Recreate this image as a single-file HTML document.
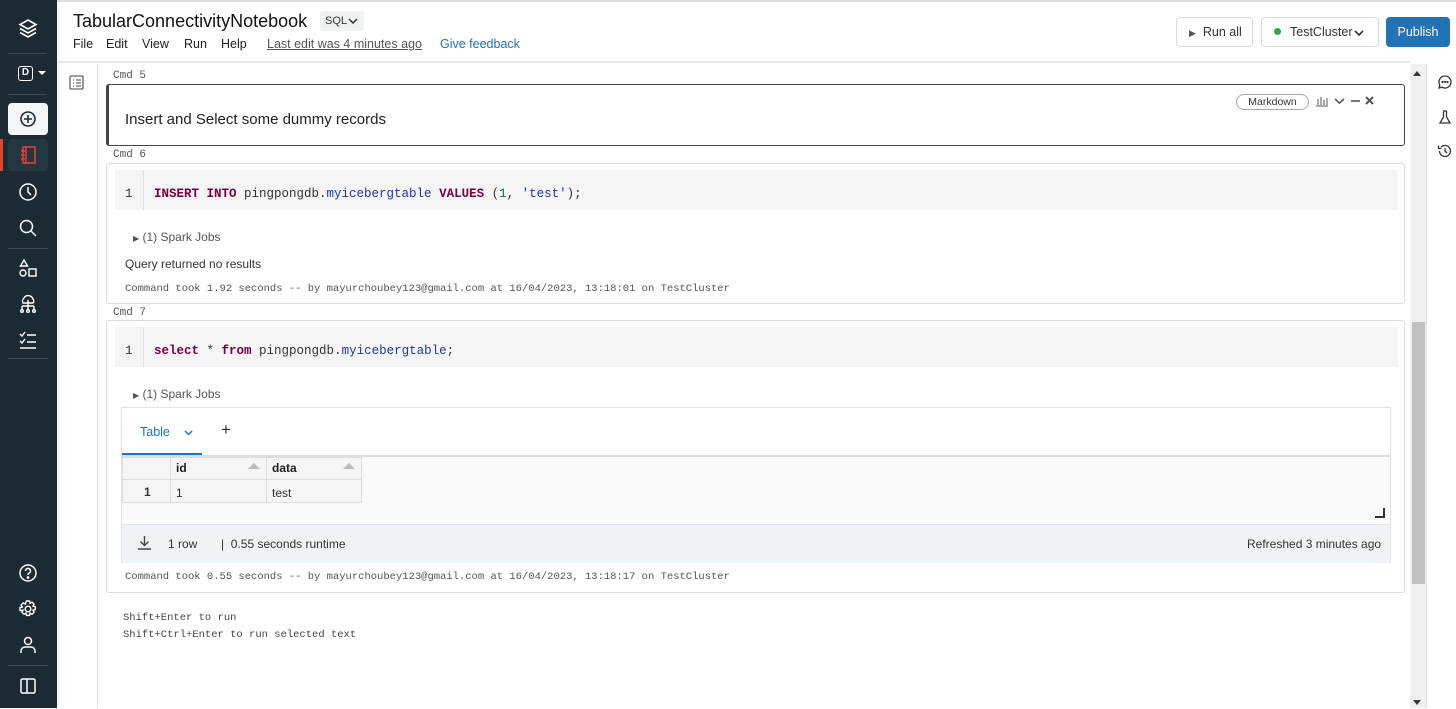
<!DOCTYPE html>
<html><head><meta charset="utf-8"><style>
*{box-sizing:border-box;margin:0;padding:0}
body{width:1456px;height:708px;overflow:hidden;background:#fff;font-family:"Liberation Sans","DejaVu Sans",sans-serif;position:relative;color:#333}
.a{position:absolute}
.mono{font-family:"Liberation Mono","DejaVu Sans Mono",monospace}
.sb{left:0;top:0;width:57px;height:708px;background:#1b2a33}
.sb svg{position:absolute;left:18px}
.cmd{font-size:11px;color:#555}
.cell{border:1px solid #ddd;border-radius:3px;background:#fff}
.code{background:#f5f5f5}
</style></head><body>
<div class="a" style="left:0;top:0;width:1456px;height:2px;background:#ddd"></div>
<div class="a sb">
 <svg style="top:18px" width="20" height="22" viewBox="0 0 20 22" fill="none" stroke="#fff" stroke-width="1.6"><path d="M10 2L18 6.5 10 11 2 6.5Z"/><path d="M2 10.5L10 15 18 10.5"/><path d="M2 14.5L10 19 18 14.5"/></svg>
 <div class="a" style="left:8px;top:53px;width:39px;height:1px;background:#3a4a52"></div>
 <div class="a" style="left:18px;top:66px;width:15px;height:15px;border:1.5px solid #fff;border-radius:3px;color:#fff;font-size:10px;font-weight:bold;text-align:center;line-height:12px">D</div>
 <div class="a" style="left:38px;top:71px;border:4px solid transparent;border-top:4px solid #fff"></div>
 <div class="a" style="left:8px;top:94px;width:39px;height:1px;background:#3a4a52"></div>
 <div class="a" style="left:8px;top:103px;width:40px;height:32px;background:#f4f5f6;border-radius:4px"></div>
 <svg style="top:110px;left:19px" width="18" height="18" viewBox="0 0 18 18" fill="none" stroke="#1b2a33" stroke-width="1.6"><circle cx="9" cy="9" r="7"/><path d="M9 5v8M5 9h8"/></svg>
 <div class="a" style="left:8px;top:139px;width:40px;height:32px;background:#24363f;border-radius:4px"></div>
 <div class="a" style="left:0;top:139px;width:3px;height:32px;background:#e8412c"></div>
 <svg style="top:146px;left:20px" width="16" height="18" viewBox="0 0 16 18" fill="none" stroke="#e8412c" stroke-width="1.5"><rect x="3" y="1" width="12" height="16"/><path d="M6 1v16M1 5h4M1 9h4M1 13h4"/></svg>
 <svg style="top:182px" width="20" height="20" viewBox="0 0 20 20" fill="none" stroke="#fff" stroke-width="1.5"><circle cx="10" cy="10" r="8"/><path d="M10 5v5l3 3"/></svg>
 <svg style="top:218px" width="20" height="20" viewBox="0 0 20 20" fill="none" stroke="#fff" stroke-width="1.5"><circle cx="8.5" cy="8.5" r="6"/><path d="M13 13l5 5"/></svg>
 <div class="a" style="left:8px;top:248px;width:40px;height:1px;background:#3a4a52"></div>
 <svg style="top:258px" width="20" height="20" viewBox="0 0 20 20" fill="none" stroke="#fff" stroke-width="1.4"><path d="M6 2l3.5 6h-7z"/><circle cx="5" cy="15" r="3"/><rect x="11" y="11" width="7" height="7"/></svg>
 <svg style="top:294px" width="20" height="20" viewBox="0 0 20 20" fill="none" stroke="#fff" stroke-width="1.4"><path d="M5 9a4 4 0 0 1 1-5 5 5 0 0 1 9 1 3 3 0 0 1 0 4H5z"/><path d="M10 6v10M4 12h12M4 12v4M16 12v4"/><circle cx="4" cy="17" r="1.3"/><circle cx="10" cy="17" r="1.3"/><circle cx="16" cy="17" r="1.3"/></svg>
 <svg style="top:330px" width="20" height="20" viewBox="0 0 20 20" fill="none" stroke="#fff" stroke-width="1.4"><path d="M2 4l2 2 3-4M9 5h9M2 11l2 2 3-4M9 12h9M2 18h16"/></svg>
 <div class="a" style="left:8px;top:358px;width:40px;height:1px;background:#3a4a52"></div>
 <svg style="top:563px" width="20" height="20" viewBox="0 0 20 20" fill="none" stroke="#fff" stroke-width="1.5"><circle cx="10" cy="10" r="8"/><path d="M7.5 8a2.5 2.5 0 1 1 3.5 2.2c-.8.4-1 .9-1 1.8"/><circle cx="10" cy="14.5" r=".6" fill="#fff"/></svg>
 <svg style="top:599px" width="20" height="20" viewBox="0 0 20 20" fill="none" stroke="#fff" stroke-width="1.4"><circle cx="10" cy="10" r="2.8"/><path d="M8.5 2h3l.5 2.3 2-1.2 2.1 2.1-1.2 2 2.3.5v3l-2.3.5 1.2 2-2.1 2.1-2-1.2-.5 2.3h-3l-.5-2.3-2 1.2-2.1-2.1 1.2-2L2 11.5v-3l2.3-.5-1.2-2 2.1-2.1 2 1.2z"/></svg>
 <svg style="top:635px" width="20" height="20" viewBox="0 0 20 20" fill="none" stroke="#fff" stroke-width="1.5"><circle cx="10" cy="6" r="3.5"/><path d="M3 18v-2a4 4 0 0 1 4-4h6a4 4 0 0 1 4 4v2"/></svg>
 <div class="a" style="left:8px;top:665px;width:40px;height:1px;background:#3a4a52"></div>
 <svg style="top:676px" width="20" height="20" viewBox="0 0 20 20" fill="none" stroke="#fff" stroke-width="1.5"><rect x="3" y="3" width="14" height="14" rx="1.5"/><path d="M9 3v14"/></svg>
</div>
<!-- header -->
<div class="a" style="left:73px;top:11px;font-size:18px;color:#111">TabularConnectivityNotebook</div>
<div class="a" style="left:320px;top:11px;width:44px;height:20px;background:#f0f1f2;border-radius:3px;font-size:11px;color:#333;padding:4px 0 0 5px">SQL</div>
<svg class="a" style="left:348px;top:17px" width="10" height="8" viewBox="0 0 10 8" fill="none" stroke="#333" stroke-width="1.5"><path d="M1 2l4 4 4-4"/></svg>
<div class="a" style="top:37px;left:73px;font-size:12.5px;color:#222">File</div>
<div class="a" style="top:37px;left:106px;font-size:12.5px;color:#222">Edit</div>
<div class="a" style="top:37px;left:142px;font-size:12.5px;color:#222">View</div>
<div class="a" style="top:37px;left:184px;font-size:12.5px;color:#222">Run</div>
<div class="a" style="top:37px;left:221px;font-size:12.5px;color:#222">Help</div>
<div class="a" style="top:37px;left:267px;font-size:12.5px;color:#555;text-decoration:underline">Last edit was 4 minutes ago</div>
<div class="a" style="top:37px;left:440px;font-size:12.5px;color:#2272b4">Give feedback</div>
<div class="a" style="left:1176px;top:17px;width:77px;height:30px;border:1px solid #d8dde2;border-radius:4px;font-size:12.5px;color:#333;padding:7px 0 0 12px"><span style="font-size:9px;color:#555">&#9654;</span>&nbsp; Run all</div>
<div class="a" style="left:1261px;top:17px;width:118px;height:30px;border:1px solid #d8dde2;border-radius:4px;font-size:12.5px;color:#333;padding:7px 0 0 12px"><span style="display:inline-block;width:7px;height:7px;border-radius:50%;background:#2ea44f;margin-right:9px;vertical-align:1px"></span>TestCluster</div>
<svg class="a" style="left:1354px;top:29px" width="10" height="8" viewBox="0 0 10 8" fill="none" stroke="#333" stroke-width="1.6"><path d="M1 2l4 4 4-4"/></svg>
<div class="a" style="left:1386px;top:17px;width:64px;height:30px;background:#2272b4;border-radius:4px;font-size:12.5px;color:#fff;text-align:center;padding-top:8px">Publish</div>
<div class="a" style="left:58px;top:61px;width:1352px;height:3px;background:linear-gradient(#ddd,#fff)"></div>
<!-- gutter -->
<div class="a" style="left:97px;top:64px;width:1px;height:644px;background:#e5e5e5"></div>
<svg class="a" style="left:69px;top:75px" width="15" height="15" viewBox="0 0 15 15" fill="none" stroke="#444" stroke-width="1.1"><rect x="1" y="1" width="13" height="13" rx="1"/><path d="M4 5h1M7 5h5M4 8h1M7 8h5M4 11h1M7 11h5"/></svg>
<!-- right panel -->
<div class="a" style="left:1410px;top:64px;width:16px;height:644px;background:#f0f0f0"></div>
<div class="a" style="left:1412px;top:322px;width:13px;height:262px;background:#c1c1c1"></div>
<div class="a" style="left:1413px;top:67px;border:4px solid transparent;border-bottom:5px solid #333"></div>
<div class="a" style="left:1413px;top:700px;border:4px solid transparent;border-top:5px solid #333"></div>
<div class="a" style="left:1426px;top:64px;width:1px;height:644px;background:#dde3ea"></div>
<svg class="a" style="left:1437px;top:74px" width="16" height="16" viewBox="0 0 16 16" fill="none" stroke="#333" stroke-width="1.3"><path d="M8 2a6 6 0 1 1-3 11.2L2 14l.8-3A6 6 0 0 1 8 2z"/><circle cx="5.5" cy="8" r=".5"/><circle cx="8" cy="8" r=".5"/><circle cx="10.5" cy="8" r=".5"/></svg>
<svg class="a" style="left:1437px;top:109px" width="16" height="16" viewBox="0 0 16 16" fill="none" stroke="#333" stroke-width="1.3"><path d="M6 2h4M6.5 2v6L3 14h10L9.5 8V2"/></svg>
<svg class="a" style="left:1437px;top:143px" width="16" height="16" viewBox="0 0 16 16" fill="none" stroke="#333" stroke-width="1.3"><path d="M2.5 8a5.5 5.5 0 1 0 1.6-3.9M1.5 2.5v3h3M8 5v3l2 2"/></svg>
<!-- Cmd 5 -->
<div class="a cmd mono" style="left:113px;top:70px">Cmd 5</div>
<div class="a" style="left:106px;top:84px;width:1299px;height:62px;border:1px solid #444;border-left:3px solid #444;border-radius:3px"></div>
<div class="a" style="left:125px;top:111px;font-size:15px;color:#222">Insert and Select some dummy records</div>
<div class="a" style="left:1236px;top:94px;width:73px;height:16px;border:1px solid #aaa;border-radius:8px;font-size:10.5px;text-align:center;color:#333;line-height:14px">Markdown</div>
<svg class="a" style="left:1315px;top:94px" width="64" height="14" viewBox="0 0 64 14" fill="none" stroke="#555" stroke-width="1.6"><path d="M1 12h12M3 11V5M6 11V3M9 11V6M12 11V4" stroke-width="1"/><path d="M20 5l4.5 4 4.5-4"/><path d="M36 7h9"/><path d="M51 3l7 7M58 3l-7 7" stroke-width="2"/></svg>
<!-- Cmd 6 -->
<div class="a cmd mono" style="left:113px;top:149px">Cmd 6</div>
<div class="a cell" style="left:106px;top:163px;width:1299px;height:141px"></div>
<div class="a code" style="left:115px;top:170px;width:1283px;height:40px"></div>
<div class="a" style="left:143px;top:170px;width:1px;height:40px;background:#e2e2e2"></div>
<div class="a mono" style="left:125px;top:187px;font-size:12.5px;color:#333">1</div>
<div class="a mono" style="left:154px;top:187px;font-size:12.5px;color:#333;white-space:pre"><b style="color:#770044">INSERT INTO</b> pingpongdb.<span style="color:#2233aa">myicebergtable</span> <b style="color:#770044">VALUES</b> (<span style="color:#116644">1</span>, <span style="color:#2233aa">'test'</span>);</div>
<div class="a" style="left:133px;top:230px;font-size:12px;color:#555"><span style="font-size:8px">&#9654;</span> (1) Spark Jobs</div>
<div class="a" style="left:125px;top:257px;font-size:12px;color:#333">Query returned no results</div>
<div class="a mono" style="left:125px;top:283px;font-size:10.5px;color:#555">Command took 1.92 seconds -- by mayurchoubey123@gmail.com at 16/04/2023, 13:18:01 on TestCluster</div>
<!-- Cmd 7 -->
<div class="a cmd mono" style="left:113px;top:307px">Cmd 7</div>
<div class="a cell" style="left:106px;top:320px;width:1299px;height:273px"></div>
<div class="a code" style="left:115px;top:327px;width:1283px;height:40px"></div>
<div class="a" style="left:143px;top:327px;width:1px;height:40px;background:#e2e2e2"></div>
<div class="a mono" style="left:125px;top:344px;font-size:12.5px;color:#333">1</div>
<div class="a mono" style="left:154px;top:344px;font-size:12.5px;color:#333;white-space:pre"><b style="color:#770044">select</b> * <b style="color:#770044">from</b> pingpongdb.<span style="color:#2233aa">myicebergtable</span>;</div>
<div class="a" style="left:133px;top:387px;font-size:12px;color:#555"><span style="font-size:8px">&#9654;</span> (1) Spark Jobs</div>
<div class="a" style="left:121px;top:407px;width:1270px;height:156px;border:1px solid #e3e3e3"></div>
<div class="a" style="left:140px;top:425px;font-size:12.5px;color:#2272b4">Table</div>
<svg class="a" style="left:184px;top:429px" width="9" height="7" viewBox="0 0 9 7" fill="none" stroke="#2272b4" stroke-width="1.5"><path d="M1 2l3.5 3.5L8 2"/></svg>
<div class="a" style="left:221px;top:420px;font-size:17px;color:#333">+</div>
<div class="a" style="left:122px;top:453px;width:80px;height:2px;background:#2272b4"></div>
<div class="a" style="left:122px;top:455px;width:1268px;height:2px;background:#ddd"></div>
<div class="a" style="left:122px;top:457px;width:1267px;height:63px;background:#f9f9f9"></div>
<div class="a" style="left:122px;top:457px;width:240px;height:46px;border:1px solid #ddd;background:#f5f5f5"></div>
<div class="a" style="left:122px;top:479px;width:240px;height:1px;background:#ddd"></div>
<div class="a" style="left:170px;top:457px;width:1px;height:46px;background:#ddd"></div>
<div class="a" style="left:266px;top:457px;width:1px;height:46px;background:#ddd"></div>
<div class="a" style="left:176px;top:461px;font-size:12px;font-weight:bold;color:#222">id</div>
<div class="a" style="left:248px;top:463px;border:6px solid transparent;border-bottom:6px solid #bbb;border-top:0"></div>
<div class="a" style="left:272px;top:461px;font-size:12px;font-weight:bold;color:#222">data</div>
<div class="a" style="left:343px;top:463px;border:6px solid transparent;border-bottom:6px solid #bbb;border-top:0"></div>
<div class="a" style="left:144px;top:485px;font-size:12px;font-weight:bold;color:#333">1</div>
<div class="a" style="left:176px;top:486px;font-size:12px;color:#333">1</div>
<div class="a" style="left:272px;top:486px;font-size:12px;color:#333">test</div>
<div class="a" style="left:1375px;top:508px;width:10px;height:10px;border-right:2px solid #333;border-bottom:2px solid #333"></div>
<div class="a" style="left:122px;top:524px;width:1268px;height:39px;background:#f0f3f6;border-top:1px solid #e6e6e6"></div>
<svg class="a" style="left:137px;top:535px" width="15" height="15" viewBox="0 0 15 15" fill="none" stroke="#444" stroke-width="1.4"><path d="M7.5 1v9M3.5 6.5l4 4 4-4M1 14h13"/></svg>
<div class="a" style="left:168px;top:537px;font-size:12px;color:#333">1 row</div>
<div class="a" style="left:221px;top:537px;font-size:12px;color:#333">| &nbsp;0.55 seconds runtime</div>
<div class="a" style="left:1247px;top:537px;font-size:12px;color:#333">Refreshed 3 minutes ago</div>
<div class="a mono" style="left:125px;top:571px;font-size:10.5px;color:#555">Command took 0.55 seconds -- by mayurchoubey123@gmail.com at 16/04/2023, 13:18:17 on TestCluster</div>
<div class="a mono" style="left:123px;top:610px;font-size:10.5px;color:#444;line-height:16.5px">Shift+Enter to run<br>Shift+Ctrl+Enter to run selected text</div>
</body></html>
